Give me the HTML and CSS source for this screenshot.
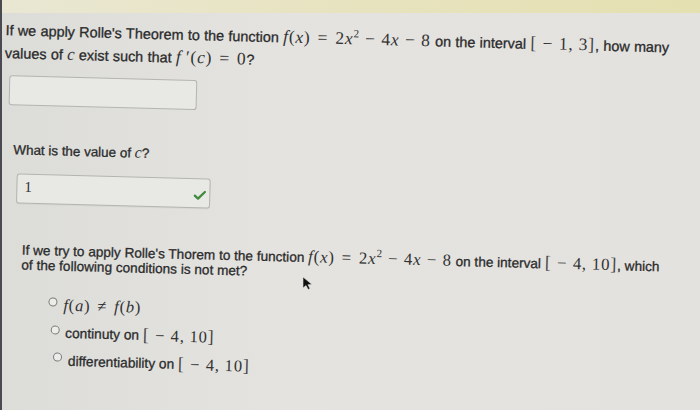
FILE: index.html
```html
<!DOCTYPE html>
<html>
<head>
<meta charset="utf-8">
<link rel="stylesheet" href="styles.css">
</head>
<body>
<div class="screen">
  <div class="topbar"></div>
  <div class="content">
    <p class="q q1">If we apply Rolle's Theorem to the function <span class="m"><i>f</i>(<i>x</i>)<span class="rel">=</span>2<i>x</i><sup>2</sup><span class="op">−</span>4<i>x</i><span class="op">−</span>8</span> on the interval <span class="m"><span class="br">[</span><span class="op">−</span>1, 3<span class="br">]</span></span>, how many<br>values of <i class="mi">c</i> exist such that <span class="m"><i>f</i>&thinsp;′(<i>c</i>)<span class="rel">=</span>0</span>?</p>
    <div class="box box1"></div>
    <p class="q q2">What is the value of <i class="mi">c</i>?</p>
    <div class="box box2"><span class="val">1</span>
      <svg class="check" width="13" height="10" viewBox="0 0 13 10"><path d="M1.5 5.5 L4.8 8.4 L11.5 1.6" fill="none" stroke="#3f8a3d" stroke-width="2.3" stroke-linecap="round" stroke-linejoin="round"/></svg>
    </div>
    <p class="q q3">If we try to apply Rolle's Thorem to the function <span class="m"><i>f</i>(<i>x</i>)<span class="rel">=</span>2<i>x</i><sup>2</sup><span class="op">−</span>4<i>x</i><span class="op">−</span>8</span> on the interval <span class="m"><span class="br">[</span><span class="op">−</span>4, 10<span class="br">]</span></span>, which<br>of the following conditions is not met?</p>
    <ul class="opts">
      <li class="o1"><span class="radio"></span><span class="m"><i>f</i>(<i>a</i>)<span class="rel">≠</span><i>f</i>(<i>b</i>)</span></li>
      <li class="o2"><span class="radio"></span>continuty on&nbsp;<span class="m"><span class="br">[</span><span class="op">−</span>4, 10<span class="br">]</span></span></li>
      <li class="o3"><span class="radio"></span>differentiability on&nbsp;<span class="m"><span class="br">[</span><span class="op">−</span>4, 10<span class="br">]</span></span></li>
    </ul>
  </div>
  <svg class="cursor" width="12" height="14" viewBox="0 0 12 14"><path d="M1 1 L1 12 L4 9.5 L6.2 13.5 L8 12.6 L5.9 8.7 L10 8.5 Z" fill="#111" stroke="#ddd" stroke-width="0.6"/></svg>
</div>
</body>
</html>
```
FILE: styles.css
```css
html, body {
  margin: 0;
  padding: 0;
}
body {
  width: 700px;
  height: 410px;
  overflow: hidden;
  background: #e2e1de;
}
.screen {
  position: relative;
  width: 698px;
  height: 410px;
  overflow: hidden;
  border-left: 2px solid #4a4a52;
  background: linear-gradient(90deg, #dcdcd9 0%, #e4e3e0 40%, #e3e2df 100%);
  font-family: "Liberation Sans", Arial, sans-serif;
  color: #2b2b2b;
}
.topbar {
  height: 13px;
  background: linear-gradient(90deg, #e9e7d3 0%, #e7e3bf 50%, #e5e0b1 100%);
}
.content {
  display: flex;
  flex-direction: column;
  align-items: flex-start;
  padding: 5px 0 0 4px;
  transform: rotate(1.5deg);
  transform-origin: 0 0;
}
.q {
  margin: 0;
  font-size: 14.4px;
  line-height: 22px;
  white-space: nowrap;
  -webkit-text-stroke: 0.3px #2b2b2b;
}
.q1 { word-spacing: 0.3px; }
.m {
  font-family: "Liberation Serif", "Times New Roman", serif;
  font-size: 17.5px;
  letter-spacing: 0.8px;
  word-spacing: 0;
  -webkit-text-stroke: 0;
  color: #333;
}
.m i, .mi {
  font-family: "Liberation Serif", "Times New Roman", serif;
  font-style: italic;
  -webkit-text-stroke: 0;
}
.mi { font-size: 17px; color: #333; }
.rel { margin: 0 7px; }
.op { margin: 0 5.5px; }
.br { color: #444; font-size: 18px; }
sup {
  font-size: 11px;
  line-height: 0;
  vertical-align: 7px;
}
.box {
  box-sizing: border-box;
  border: 1px solid #b4b4b1;
  border-radius: 3px;
  background: #e8e8e5;
}
.box1 {
  margin: 11px 0 0 5px;
  width: 188px;
  height: 30px;
}
.q2 {
  margin: 33px 0 0 11px;
  font-size: 13.4px;
}
.q2 .mi { font-size: 16px; }
.box2 {
  margin: 12px 0 0 15px;
  width: 194px;
  height: 30px;
  display: flex;
  align-items: center;
  justify-content: space-between;
  padding: 0 3px 0 7px;
  box-shadow: 0 1px 0 rgba(0, 0, 0, 0.04);
}
.val {
  font-family: "Liberation Serif", serif;
  font-size: 15px;
  color: #333;
  margin-top: -3px;
}
.check {
  margin-top: 4px;
}
.q3 {
  margin: 38px 0 0 22px;
  font-size: 13.6px;
  line-height: 15px;
}
.q3 .m { font-size: 16.8px; }
.opts {
  list-style: none;
  margin: 22px 0 0 0;
  padding: 0;
  display: flex;
  flex-direction: column;
  gap: 7.5px;
  font-size: 13.7px;
  -webkit-text-stroke: 0.3px #2b2b2b;
}
.opts .m { font-size: 16.5px; }
.opts li {
  display: flex;
  align-items: center;
  height: 20px;
  white-space: nowrap;
}
.o1 { margin-left: 50px; }
.o2 { margin-left: 52.6px; }
.o3 { margin-left: 56px; }
.radio {
  box-sizing: border-box;
  align-self: flex-start;
  width: 9px;
  height: 9px;
  margin-top: 2px;
  border: 1.4px solid #7a7a7a;
  border-radius: 50%;
  background: #ecece9;
  margin-right: 6px;
  -webkit-text-stroke: 0;
}
.cursor {
  position: absolute;
  left: 300px;
  top: 276px;
}
```
